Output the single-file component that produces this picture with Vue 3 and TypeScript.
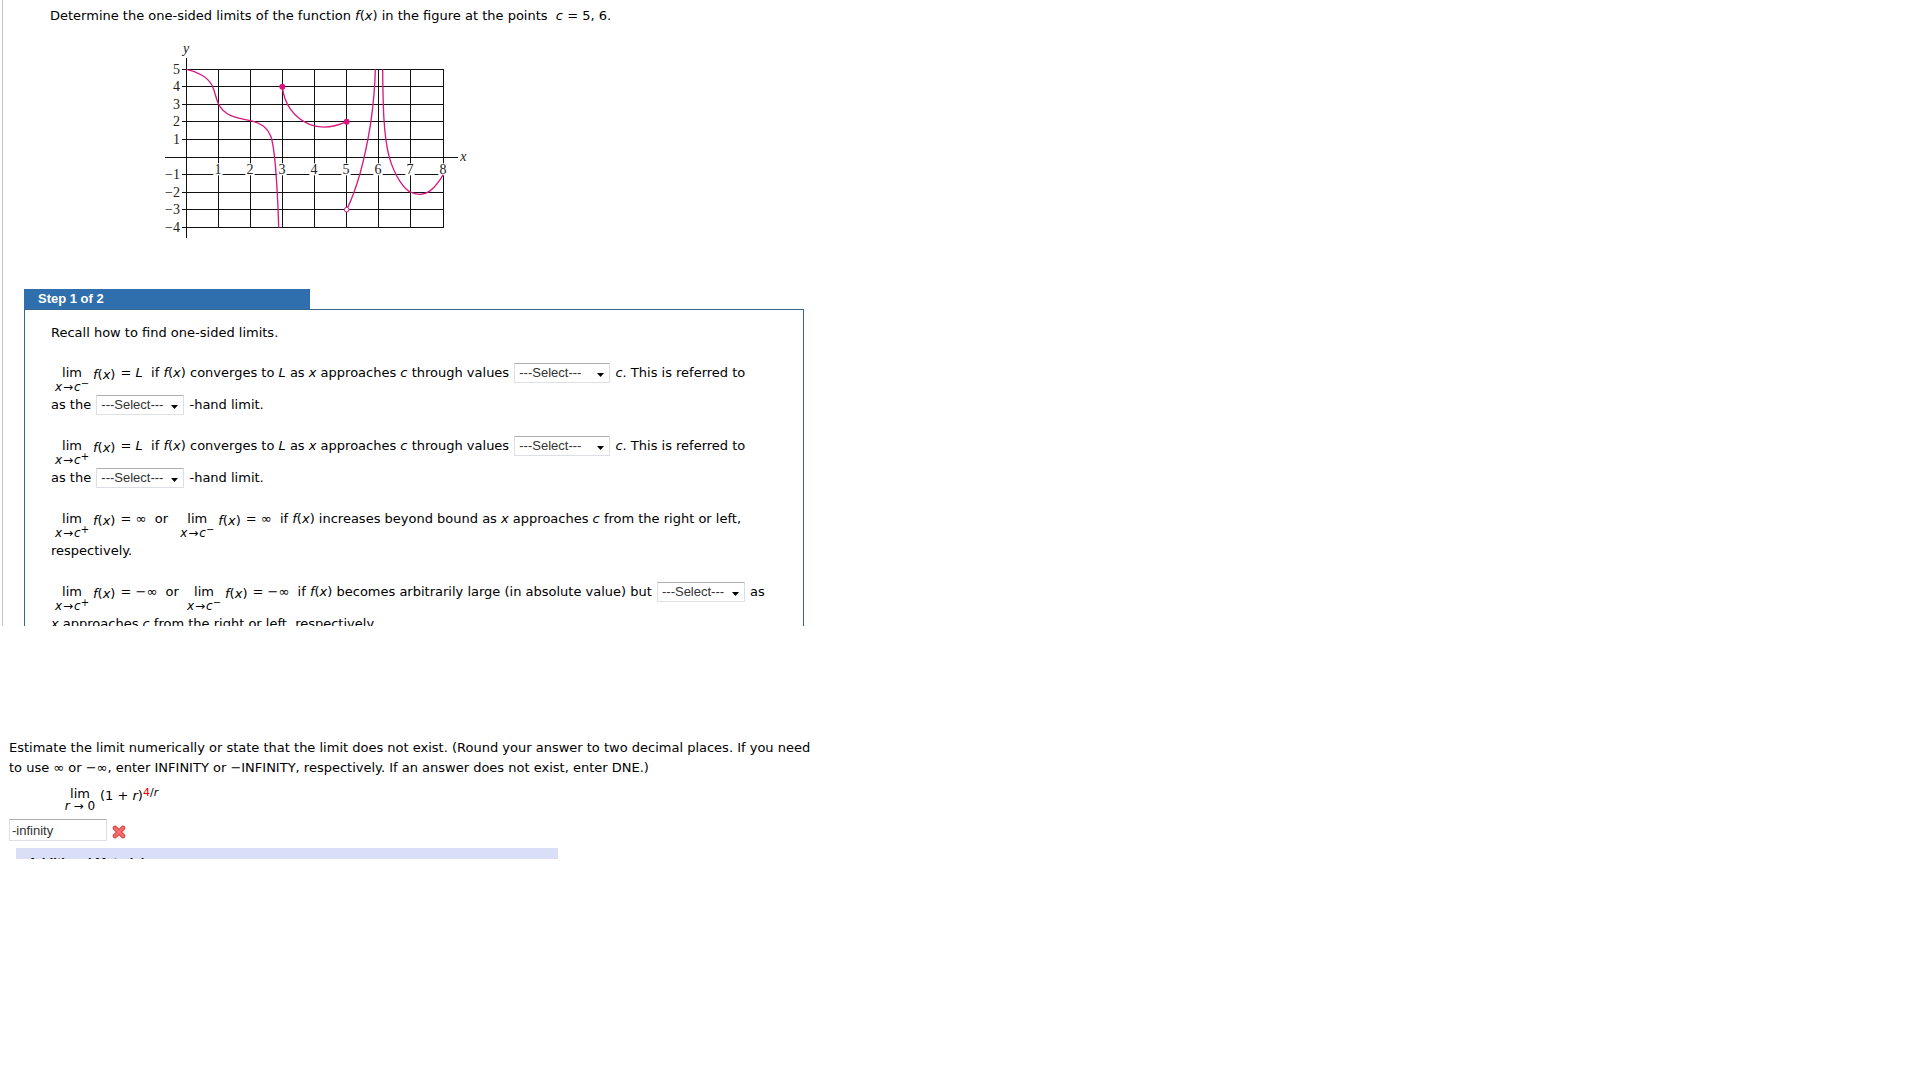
<script setup lang="ts">
import { ref } from 'vue'

interface Mark {
  label: string
  at: number
}

const answer = ref('-infinity')
const columns: number[] = [205, 301, 397, 493, 589, 685, 781, 880]
const rows: number[] = [100, 152, 205, 257, 310, 469, 521, 575]
const xMarks: Mark[] = columns.map((at, i) => ({ label: String(i + 1), at }))
const yMarks: Mark[] = [
  { label: '5', at: 100 },
  { label: '4', at: 152 },
  { label: '3', at: 205 },
  { label: '2', at: 257 },
  { label: '1', at: 310 },
  { label: '−1', at: 416 },
  { label: '−2', at: 469 },
  { label: '−3', at: 521 },
  { label: '−4', at: 575 },
]
</script>

<template>
  <main class="page">
    <section class="tutorial">
      <p class="question">Determine the one-sided limits of the function <i>f</i>(<i>x</i>) in the figure at the points&nbsp; <i>c</i> = 5, 6.</p>

      <svg class="graph" viewBox="0 0 990 630" role="img" aria-label="Graph of f(x)">
        <g class="grid">
          <line v-for="y in rows" :key="'r' + y" x1="96" :y1="y" x2="880" :y2="y" />
          <line x1="96" y1="416" x2="880" y2="416" />
          <line v-for="x in columns" :key="'c' + x" :x1="x" y1="100" :x2="x" y2="575" />
          <line x1="45" y1="364" x2="924" y2="364" />
          <line x1="109" y1="66" x2="109" y2="606" />
        </g>
        <g class="labels">
          <template v-for="m in xMarks" :key="m.label">
            <rect :x="m.at - 15" y="382" width="28" height="36" fill="#fff" />
            <text :x="m.at - 1" y="413" text-anchor="middle">{{ m.label }}</text>
          </template>
          <text v-for="m in yMarks" :key="m.label" x="90" :y="m.at + 14" text-anchor="end">{{ m.label }}</text>
          <text x="99" y="52" font-style="italic">y</text>
          <text x="931" y="374" font-style="italic">x</text>
        </g>
        <g class="curve">
          <path d="M109 100C140 106 174 123 186 148C197 172 198 190 206 205C222 238 256 246 301 254C336 262 352 276 362 300C374 332 377 400 380 440C383 490 385 530 386 575" />
          <path d="M397 152C402 204 432 246 480 266C512 278 552 274 590 257" />
          <path d="M590 521C620 460 646 362 662 262C671 200 675 150 676 100" />
          <path d="M698 100C699 200 700 300 718 364C734 420 764 464 784 469C830 490 858 452 880 416" />
          <circle cx="397" cy="152" r="7" class="dot" />
          <circle cx="590" cy="257" r="7" class="dot" />
          <circle cx="590" cy="521" r="7" class="hole" />
        </g>
      </svg>

      <h2 class="tab">Step 1 of 2</h2>
      <div class="step">
        <p class="recall">Recall how to find one-sided limits.</p>

        <div class="rule">
          <div class="line"><span class="lim"><span>lim</span><small><i>x</i><b>→</b><i>c</i><sup>−</sup></small></span><span class="fn"><i>f</i>(<i>x</i>)</span> = <i>L</i>&nbsp; if <i>f</i>(<i>x</i>) converges to <i>L</i> as <i>x</i> approaches <i>c</i> through values <select class="pick wide" aria-label="Values for the left limit"><option>---Select---</option></select> <i>c</i>. This is referred to</div>
          <div class="line">as the <select class="pick" aria-label="Side of the first limit"><option>---Select---</option></select> -hand limit.</div>
        </div>

        <div class="rule">
          <div class="line"><span class="lim"><span>lim</span><small><i>x</i><b>→</b><i>c</i><sup>+</sup></small></span><span class="fn"><i>f</i>(<i>x</i>)</span> = <i>L</i>&nbsp; if <i>f</i>(<i>x</i>) converges to <i>L</i> as <i>x</i> approaches <i>c</i> through values <select class="pick wide" aria-label="Values for the right limit"><option>---Select---</option></select> <i>c</i>. This is referred to</div>
          <div class="line">as the <select class="pick" aria-label="Side of the second limit"><option>---Select---</option></select> -hand limit.</div>
        </div>

        <div class="rule">
          <div class="line"><span class="lim"><span>lim</span><small><i>x</i><b>→</b><i>c</i><sup>+</sup></small></span><span class="fn"><i>f</i>(<i>x</i>)</span> = ∞&nbsp; or&nbsp; <span class="lim"><span>lim</span><small><i>x</i><b>→</b><i>c</i><sup>−</sup></small></span><span class="fn"><i>f</i>(<i>x</i>)</span> = ∞&nbsp; if <i>f</i>(<i>x</i>) increases beyond bound as <i>x</i> approaches <i>c</i> from the right or left,</div>
          <div class="line">respectively.</div>
        </div>

        <div class="rule">
          <div class="line"><span class="lim"><span>lim</span><small><i>x</i><b>→</b><i>c</i><sup>+</sup></small></span><span class="fn"><i>f</i>(<i>x</i>)</span> = −∞&nbsp; or <span class="lim"><span>lim</span><small><i>x</i><b>→</b><i>c</i><sup>−</sup></small></span><span class="fn"><i>f</i>(<i>x</i>)</span> = −∞&nbsp; if <i>f</i>(<i>x</i>) becomes arbitrarily large (in absolute value) but <select class="pick" aria-label="Behaviour of the function"><option>---Select---</option></select> as</div>
          <div class="line"><i>x</i> approaches <i>c</i> from the right or left, respectively.</div>
        </div>
      </div>
    </section>

    <section class="estimate">
      <p class="prompt">Estimate the limit numerically or state that the limit does not exist. (Round your answer to two decimal places. If you need<br />to use ∞ or −∞, enter INFINITY or −INFINITY, respectively. If an answer does not exist, enter DNE.)</p>
      <div class="formula"><span class="lim"><span>lim</span><small><i>r</i> → 0</small></span><span class="fn">(1 + <i>r</i>)<sup><em>4</em>/<i>r</i></sup></span></div>
      <div class="answer">
        <input v-model="answer" type="text" aria-label="Limit" />
        <svg viewBox="0 0 14 14" role="img" aria-label="Incorrect">
          <path d="M3 3L11 11M11 3L3 11" stroke="#d9423f" stroke-width="4.6" stroke-linecap="round" />
          <path d="M3 3L11 11M11 3L3 11" stroke="#f4696a" stroke-width="3" stroke-linecap="round" />
        </svg>
      </div>
      <h3 class="materials">Additional Materials</h3>
    </section>
  </main>
</template>

<style>
body {
  margin: 0;
  background: #fff;
}
</style>

<style scoped>
.page {
  font: 13px/20px Verdana, "DejaVu Sans", sans-serif;
  color: #000;
  white-space: nowrap;
}
p,
h2,
h3 {
  margin: 0;
}
.tutorial {
  box-sizing: border-box;
  max-height: 626px;
  margin-left: 2px;
  padding: 6px 0 0 21px;
  border-left: 1px solid #c4c4c4;
  overflow: hidden;
}
.question {
  padding-left: 26px;
}
.graph {
  display: block;
  width: 330px;
  height: 210px;
  margin: 10px 0 43px 126px;
}
.grid line {
  stroke: #111;
  stroke-width: 3;
  shape-rendering: crispEdges;
}
.labels {
  font: 42px "Liberation Serif", serif;
  fill: #222;
}
.curve {
  fill: none;
  stroke: #d6187f;
  stroke-width: 4;
}
.curve .dot {
  fill: #e5097f;
}
.curve .hole {
  fill: #fff;
  stroke-width: 3;
}
.tab {
  box-sizing: border-box;
  width: 286px;
  height: 20px;
  padding-left: 14px;
  background: #2f6fad;
  color: #fff;
  font: bold 13px/19px "Liberation Sans", Arial, sans-serif;
}
.step {
  box-sizing: border-box;
  max-width: 780px;
  padding: 13px 0 20px 26px;
  border: 1px solid #35688c;
}
.recall {
  margin-bottom: 18px;
}
.rule {
  margin-bottom: 9px;
}
.line {
  height: 32px;
  line-height: 24px;
}
.lim {
  display: inline-flex;
  flex-direction: column;
  align-items: center;
  width: 34px;
  margin: 0 4px;
  line-height: 14px;
}
small {
  font-size: 12px;
  line-height: 14px;
}
b {
  margin: 0 1px;
  font-weight: normal;
}
sup {
  font-size: 10px;
  line-height: 1px;
  vertical-align: 4px;
}
.fn {
  position: relative;
  top: 2px;
  margin-right: 1px;
}
.pick,
input {
  box-sizing: border-box;
  border: 1px solid #dcdfe6;
  border-top-color: #abadb3;
  border-radius: 1px;
  color: #333;
  font: 13px/17px "Liberation Sans", Arial, sans-serif;
}
.pick {
  appearance: none;
  width: 88px;
  height: 20px;
  margin: 0 1px;
  padding: 0 4px;
  background: #fff url("data:image/svg+xml,%3Csvg xmlns='http://www.w3.org/2000/svg' viewBox='0 0 7 4'%3E%3Cpath d='M0 0H7L3.5 4Z'/%3E%3C/svg%3E") no-repeat right 5px top 9px / 7px 4px;
}
.wide {
  width: 96px;
}
.estimate {
  height: 121px;
  margin-top: 112px;
  padding-left: 9px;
  overflow: hidden;
}
.formula {
  height: 37px;
  margin-top: 4px;
  padding-left: 50px;
  line-height: 24px;
}
.formula .lim {
  margin-right: 3px;
  line-height: 13px;
}
.formula small {
  line-height: 13px;
}
.formula sup {
  font-size: 11px;
}
em {
  color: #e00000;
  font-style: normal;
}
.answer {
  display: flex;
  align-items: center;
  gap: 5px;
  height: 22px;
}
.answer input {
  width: 98px;
  height: 22px;
  padding: 0 2px;
}
.answer svg {
  width: 14px;
  height: 14px;
  margin-top: 4px;
}
.materials {
  width: 530px;
  margin: 7px 0 0 7px;
  padding: 7px 0 6px 12px;
  background: #d8dff7;
  font: bold 13px/16px "Liberation Sans", Arial, sans-serif;
}
</style>
